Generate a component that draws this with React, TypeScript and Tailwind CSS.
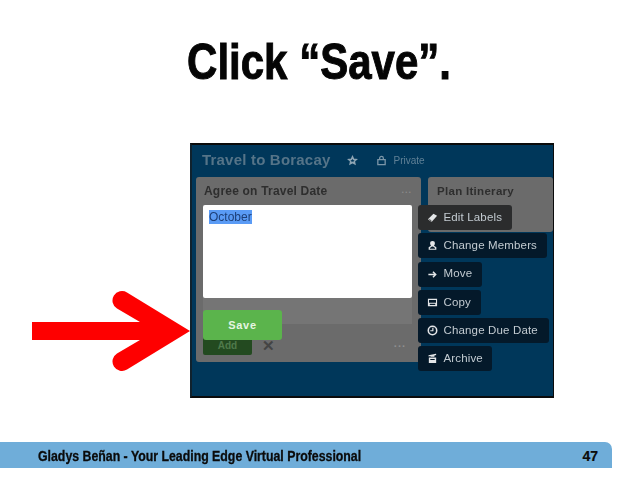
const menuItems = [
  { label: 'Edit Labels', width: 'w-[94px]', bg: 'bg-[#2b2c2d]', icon: 'tag' },
  { label: 'Change Members', width: 'w-[129px]', bg: 'bg-[#04192a]', icon: 'user' },
  { label: 'Move', width: 'w-[64px]', bg: 'bg-[#04192a]', icon: 'arrow' },
  { label: 'Copy', width: 'w-[63px]', bg: 'bg-[#04192a]', icon: 'card' },
  { label: 'Change Due Date', width: 'w-[131px]', bg: 'bg-[#04192a]', icon: 'clock' },
  { label: 'Archive', width: 'w-[74px]', bg: 'bg-[#04192a]', icon: 'archive' },
];

function MenuIcon({ name }: { name: string }) {
  return (
    <svg width="11" height="11" viewBox="0 0 12 12" className="shrink-0 text-[#e4e6e8]">
      {name === 'tag' && (
        <g>
          <path d="M1 8 7 2l4 2-6 7z" fill="currentColor" />
          <path d="M2.6 8 5 10" stroke="#2b2c2d" strokeWidth="1" />
        </g>
      )}
      {name === 'user' && (
        <path
          d="M6 1.2a2.6 2.6 0 0 1 2.6 2.7c0 1-.5 1.8-1 2.3l2.6 1.6v2.9H1.8V7.8l2.6-1.6c-.5-.5-1-1.3-1-2.3A2.6 2.6 0 0 1 6 1.2zM3.2 8.6v1h5.6v-1L6.6 7.2H5.4z"
          fill="currentColor"
          fillRule="evenodd"
        />
      )}
      {name === 'arrow' && (
        <path d="M1.5 6h8M6.5 3l3 3-3 3" fill="none" stroke="currentColor" strokeWidth="1.6" />
      )}
      {name === 'card' && (
        <path
          d="M1 2h10v8H1zM2.2 3.2v3h7.6v-3zM3 7.4v1.4h6V7.4z"
          fill="currentColor"
          fillRule="evenodd"
        />
      )}
      {name === 'clock' && (
        <g fill="none" stroke="currentColor">
          <circle cx="6" cy="6" r="4.6" strokeWidth="1.7" />
          <path d="M6.4 3v3.3H3.6" strokeWidth="1.3" />
        </g>
      )}
      {name === 'archive' && (
        <path
          d="M2 5h8v6H2zM3.6 6.6v1h4.8v-1zM1.6 2.4 9.8.8l.3 1.4-2 .4V4H3.8V3.4l-2 .4z"
          fill="currentColor"
          fillRule="evenodd"
        />
      )}
    </svg>
  );
}

function BoardShot() {
  return (
    <div className="relative h-[255px] w-[364px] overflow-hidden border-t-2 border-b-2 border-l-2 border-r border-t-[#0b0b0b] border-b-[#0b0b0b] border-l-[#10222e] border-r-[#0b0b0b] bg-[#00375a] font-['Liberation_Sans',sans-serif]">
      <div className="flex h-[30px] items-center pl-[10px]">
        <span className="text-[15px] font-bold tracking-[0.2px] text-[#557488] blur-[0.4px]">Travel to Boracay</span>
        <svg width="11" height="11" viewBox="0 0 12 12" className="ml-[17px] text-[#8ea5b4]">
          <path d="m6 2 1.2 2.6 2.8.3-2.1 1.9.6 2.8L6 8.2 3.5 9.6l.6-2.8L2 4.9l2.8-.3z" fill="none" stroke="currentColor" strokeWidth="1.7" />
        </svg>
        <svg width="11" height="11" viewBox="0 0 12 12" className="ml-[18px] text-[#7c97a9]">
          <path d="M2 5h8v5.5H2zM4 5V3.5a2 2 0 0 1 4 0V5" fill="none" stroke="currentColor" strokeWidth="1.4" />
        </svg>
        <span className="ml-[6px] text-[10px] text-[#5f8096] blur-[0.3px]">Private</span>
      </div>
      <div className="mt-[2px] flex items-start pl-[4px]">
        <div className="h-[185px] w-[226px] rounded-[3px] bg-[#6b6b6b] px-[7px]">
          <div className="flex h-[28px] items-center justify-between pr-[2px]">
            <span className="pl-px text-[12px] font-bold tracking-[0.2px] text-[#2e2e2e] blur-[0.3px]">Agree on Travel Date</span>
            <span className="text-[9px] font-bold tracking-[1px] text-[#8a8a8a]">...</span>
          </div>
          <div className="-mb-px h-[119px] w-[209px] rounded-t-[2px] bg-[#757575]">
            <div className="h-[93px] rounded-[2px] bg-white px-[6px] pt-[5px]">
              <span className="block w-fit bg-[#5a9bf5] text-[12px] leading-[14px] text-[#1d3f78] blur-[0.3px]">October</span>
            </div>
          </div>
          <div className="mt-[12px] flex items-center">
            <div className="flex h-[20px] w-[49px] items-center justify-center rounded-[2px] bg-[#234a20] text-[10px] font-bold text-[#4f7a4b]">Add</div>
            <span className="ml-[10px] text-[15px] font-bold leading-none text-[#444444]">✕</span>
            <span className="ml-auto mb-[4px] pr-[8px] text-[11px] font-bold tracking-[1px] text-[#8f8f8f]">...</span>
          </div>
        </div>
        <div className="ml-[7px] flex h-[55px] w-[125px] shrink-0 items-start rounded-[3px] bg-[#6b6b6b] pl-[9px]">
          <span className="text-[11.5px] font-bold leading-[28px] tracking-[0.3px] text-[#2e2e2e] blur-[0.3px]">Plan Itinerary</span>
        </div>
      </div>

      <div className="absolute left-[11px] top-[165px] flex h-[30px] w-[79px] items-center justify-center rounded-[3px] bg-[#5bb44c] text-[11px] font-bold tracking-[0.7px] text-[#e6f5e2]">
        Save
      </div>

      <div className="absolute left-[226px] top-[60px] flex flex-col gap-[3.3px]">
        {menuItems.map((item) => (
          <div
            key={item.label}
            className={`flex h-[25px] items-center gap-[5.5px] rounded-[3px] pl-[9px] text-[11.5px] tracking-[0.15px] text-[#c3cbd1] ${item.width} ${item.bg}`}
          >
            <MenuIcon name={item.icon} />
            <span className="blur-[0.2px]">{item.label}</span>
          </div>
        ))}
      </div>
    </div>
  );
}

export default function App() {
  return (
    <div className="flex h-[479px] w-[638px] flex-col overflow-hidden bg-white font-['Liberation_Sans',sans-serif]">
      <h1 className="mt-[33px] h-[58px] scale-x-[0.84] text-center text-[50px] font-bold leading-[58px] text-[#050505] [-webkit-text-stroke:1px_#050505]">
        Click “Save”.
      </h1>
      <div className="mt-[52px] flex items-end pl-[32px]">
        <svg width="158" height="82" viewBox="32 290 158 80" className="mb-[26px] shrink-0">
          <path
            d="M32 321H140L117 307.6A9.5 9.5 0 0 1 127 291.4L190 330L127 368.6A9.5 9.5 0 0 1 117 352.4L140 339H32Z"
            fill="#fe0000"
          />
        </svg>
        <BoardShot />
      </div>
      <div className="mt-[44px] flex h-[26px] w-[612px] items-center justify-between rounded-tr-[7px] bg-[#6fadd9] pl-[38px] pr-[14px] pt-[3px] text-[14px] font-bold text-[#0b0b0b]">
        <span className="origin-left scale-x-[0.88] [-webkit-text-stroke:0.3px_#0b0b0b]">Gladys Beñan - Your Leading Edge Virtual Professional</span>
        <span className="[-webkit-text-stroke:0.2px_#0b0b0b]">47</span>
      </div>
    </div>
  );
}
